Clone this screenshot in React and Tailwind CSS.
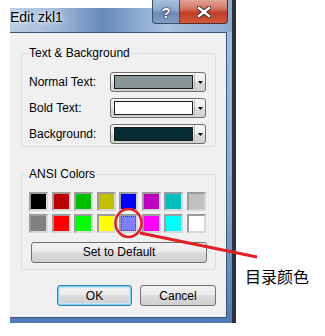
import React from "react";

const comboRows = [
  { label: "Normal Text:", color: "#869595" },
  { label: "Bold Text:", color: "#ffffff" },
  { label: "Background:", color: "#062b30" },
];

const ansiColors = [
  ["#000000", "#c00000", "#00c000", "#c0c000", "#0000ff", "#c000c0", "#00c0c0", "#c0c0c0"],
  ["#808080", "#ff0000", "#00ff00", "#ffff00", "#8080ff", "#ff00ff", "#00ffff", "#ffffff"],
];

function GroupBox({ title, className, children }) {
  return (
    <div className={"relative mx-[11px] mr-[10px] rounded-[3px] border border-[#d5dfe5] " + className}>
      <div className="absolute left-[6px] top-[-8px] bg-[#f0f0f0] px-[1px] text-[12px] leading-[14px] text-black">
        {title}
      </div>
      {children}
    </div>
  );
}

function Combo({ color }) {
  return (
    <div className="flex h-[20px] w-[96px] items-center rounded-[3px] border border-[#707070] bg-[linear-gradient(180deg,#f6f6f6_0%,#ececec_50%,#dcdcdc_51%,#d0d0d0_100%)]">
      <div className="ml-[3px] h-[14px] w-[80px] border border-[#1c1c1c]" style={{ backgroundColor: color }} />
      <div className="ml-[1px] h-[16px] w-[1px] bg-[#b8b8b8]" />
      <svg width="9" height="20" viewBox="0 0 9 20" className="ml-[1px]">
        <path d="M2 9 L7 9 L4.5 12 Z" fill="#000" />
      </svg>
    </div>
  );
}

function Swatch({ color, selected }) {
  return (
    <div className="h-[19px] border-2 border-t-[#9c9c9c] border-l-[#9c9c9c] border-b-[#d8d8d8] border-r-[#d8d8d8]">
      <div
        className={"h-full w-full " + (selected ? "outline outline-1 outline-dotted -outline-offset-1 outline-[#4a4a20]" : "")}
        style={{ backgroundColor: color }}
      />
    </div>
  );
}

function WinButton({ children, focused, className }) {
  return (
    <div
      className={
        "flex h-[21px] items-center justify-center rounded-[3px] border text-[12px] text-black bg-[linear-gradient(180deg,#f3f3f3_0%,#ebebeb_45%,#dddddd_50%,#cfcfcf_100%)] " +
        (focused
          ? "border-[#3c7fb1] shadow-[inset_0_0_0_1px_#7cd2f6,inset_0_0_0_2px_#bfe9fa] "
          : "border-[#707070] ") +
        className
      }
    >
      {children}
    </div>
  );
}

export default function App() {
  return (
    <div className="relative h-[336px] w-[325px] overflow-hidden bg-white font-['Liberation_Sans',Arial,sans-serif]">
      <div className="flex">
        <div className="w-[10px]" />
        {/* window */}
        <div className="flex h-[323px] w-[222px] flex-col bg-[linear-gradient(180deg,#a9c1dd_0%,#8eabd2_55%,#4f7cb8_100%)]">
          {/* title bar */}
          <div className="flex h-[32px] bg-[linear-gradient(90deg,#b9cce4_0%,#a3bbd9_20%,#6489b9_42%,#86a6cf_55%,#a9c0de_70%,#8caad1_100%)]">
            <div className="flex w-[142px] flex-col">
              <div className="h-[8px] bg-white" />
              <div className="pt-[1px] text-[14px] leading-[16px] text-black [text-shadow:0_0_6px_#ffffff,0_0_3px_#ffffff]">
                Edit zkl1
              </div>
            </div>
            <div className="flex h-[24px]">
              <div className="flex w-[28px] items-center justify-center rounded-bl-[4px] border border-t-0 border-[#3a4f6c] bg-[linear-gradient(180deg,#a9bfdc_0%,#8aa6cb_45%,#6a8ab5_55%,#7f9ec6_100%)] pt-[1px] text-[15px] font-bold leading-none text-white [text-shadow:0_0_1px_#1c2a3c,0_0_1px_#1c2a3c,0_0_2px_#1c2a3c]">
                ?
              </div>
              <div className="flex w-[48px] items-center justify-center rounded-br-[4px] border border-l-0 border-t-0 border-[#5a2a24] bg-[linear-gradient(180deg,#e2a597_0%,#d2715e_40%,#c23c23_55%,#d0593e_100%)]">
                <svg width="14" height="12" viewBox="0 0 14 12">
                  <path d="M2 2 L12 10 M12 2 L2 10" stroke="#3b2420" strokeWidth="4.5" strokeLinecap="square" />
                  <path d="M2 2 L12 10 M12 2 L2 10" stroke="#ffffff" strokeWidth="2.5" strokeLinecap="square" />
                </svg>
              </div>
            </div>
          </div>

          {/* client area */}
          <div className="mr-[5px] flex flex-col border border-l-0 border-[#3d5877] bg-[#f0f0f0] pb-[11px]">
            <GroupBox title="Text & Background" className="mt-[20px] h-[94px] pl-[7px] pt-[18px]">
              <div className="flex flex-col gap-[6px]">
                {comboRows.map((row) => (
                  <div key={row.label} className="flex items-center">
                    <div className="w-[81px] text-[12px] text-black">{row.label}</div>
                    <Combo color={row.color} />
                  </div>
                ))}
              </div>
            </GroupBox>

            <GroupBox title="ANSI Colors" className="mt-[27px] h-[96px] pt-[17px]">
              <div className="ml-[7px] grid w-[177px] grid-cols-8 gap-x-[3.5px] gap-y-[2.5px]">
                {ansiColors.map((row, r) =>
                  row.map((c, i) => <Swatch key={r + "-" + i} color={c} selected={r === 1 && i === 4} />)
                )}
              </div>
              <WinButton className="ml-[9px] mt-[9px] h-[20px] w-[176px]">Set to Default</WinButton>
            </GroupBox>

            <div className="mt-[15px] flex justify-end gap-[8px] pr-[10px]">
              <WinButton focused className="w-[75px]">OK</WinButton>
              <WinButton className="w-[76px]">Cancel</WinButton>
            </div>
          </div>
        </div>
        <div className="h-[323px] w-[4px] bg-[#2b323c]" />
      </div>

      {/* annotation */}
      <svg className="pointer-events-none absolute left-0 top-0" width="325" height="336" viewBox="0 0 325 336">
        <ellipse cx="128.5" cy="223" rx="13" ry="14" fill="none" stroke="#e31e24" strokeWidth="2.5" />
        <path d="M140 233 L257 257" stroke="#e31e24" strokeWidth="3" />
      </svg>
      <div className="absolute left-[245px] top-[266px] font-['Noto_Sans_CJK_SC',sans-serif] text-[16px] leading-[20px] text-black">
        目录颜色
      </div>
    </div>
  );
}
